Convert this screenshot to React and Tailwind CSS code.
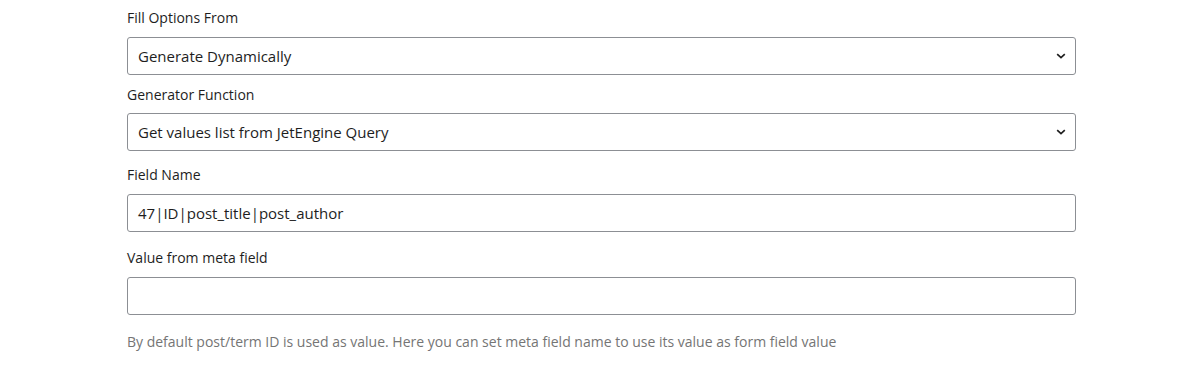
import React from "react";

const font = { fontFamily: '"Open Sans", "Noto Sans", sans-serif' };

function Chevron() {
  return (
    <svg width="10" height="6" viewBox="0 0 10 6" className="absolute right-[9px] top-1/2 -translate-y-1/2">
      <path d="M1.2 1.2L5 4.6l3.8-3.4" fill="none" stroke="#1e1e1e" strokeWidth="1.7" />
    </svg>
  );
}

function Label({ children, className = "" }) {
  return <div className={"text-[14px] leading-[20px] text-[#1e1e1e] " + className}>{children}</div>;
}

function Box({ children, select }) {
  return (
    <div className="relative h-[38px] w-[949px] rounded-[3px] border border-[#8c8f94] bg-white pl-[10px] flex items-center text-[15px] text-[#1e1e1e]">
      <span>{children}</span>
      {select && <Chevron />}
    </div>
  );
}

export default function App() {
  return (
    <div className="w-[1200px] h-[366px] bg-white pl-[127px] pt-[8px]" style={font}>
      <Label className="mb-[9px]">Fill Options From</Label>
      <Box select>Generate Dynamically</Box>
      <Label className="mt-[10px] mb-[8px]">Generator Function</Label>
      <Box select>Get values list from JetEngine Query</Box>
      <Label className="mt-[14px] mb-[9px]">Field Name</Label>
      <Box>47|ID|post_title|post_author</Box>
      <Label className="mt-[16px] mb-[9px]">Value from meta field</Label>
      <Box></Box>
      <div className="mt-[18px] text-[14px] leading-[18px] text-[#757575]">
        By default post/term ID is used as value. Here you can set meta field name to use its value as form field value
      </div>
    </div>
  );
}
